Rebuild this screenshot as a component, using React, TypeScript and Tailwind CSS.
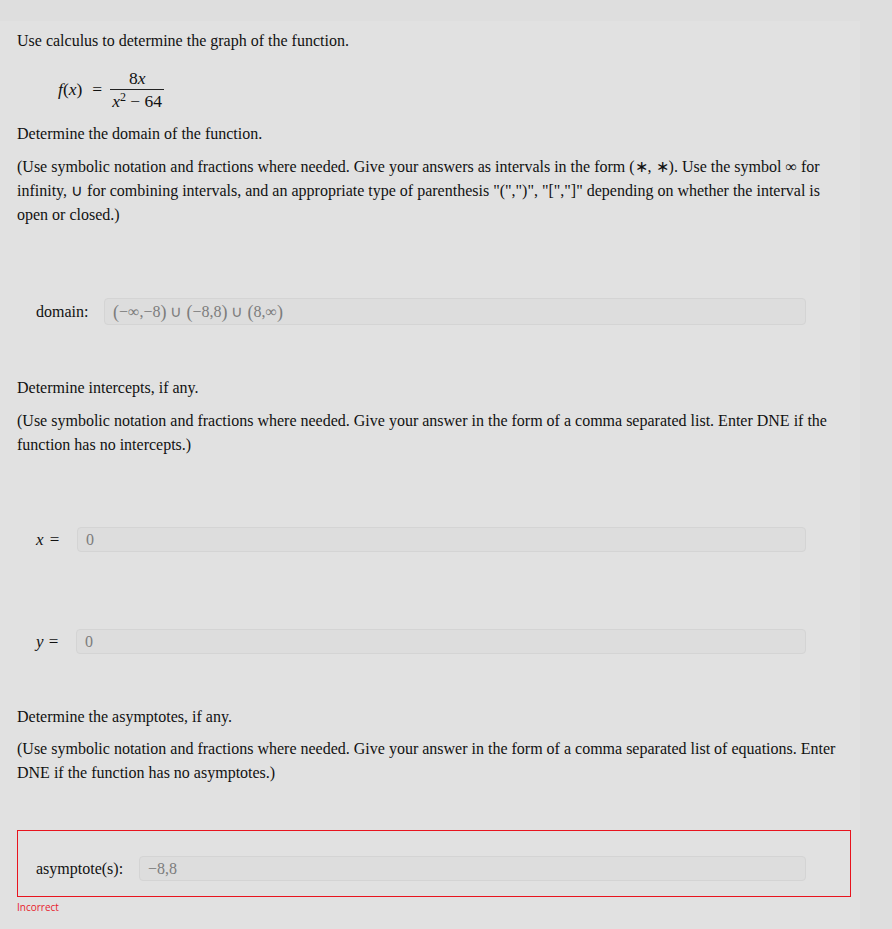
const serif = { fontFamily: '"Liberation Serif", "Times New Roman", serif' }

function Input({ children, h = 'h-[25px]' }: { children: React.ReactNode; h?: string }) {
  return (
    <div
      className={`flex-1 ${h} flex items-center rounded-[4px] border border-[#d4d4d4] bg-[#dddddd] px-[8px] text-[#7c7c7c]`}
    >
      {children}
    </div>
  )
}

function Paren({ children }: { children: React.ReactNode }) {
  return <span className="text-[18px] leading-none">{children}</span>
}

export default function App() {
  return (
    <div className="min-h-screen bg-[#dedede] pt-[21px] text-[16px] leading-[24px] text-[#111]" style={serif}>
      <div className="w-[860px] min-h-[908px] bg-[#e1e1e1] pl-[17px] pr-[9px] pt-[8px] pb-[20px]">
        <p>Use calculus to determine the graph of the function.</p>

        {/* f(x) = 8x / (x^2 - 64) */}
        <div className="mt-[12px] ml-[41px] flex items-center h-[48px] text-[17.5px]">
          <span>
            <i>f</i>(<i>x</i>)
          </span>
          <span className="ml-[10px] mr-[8px]">=</span>
          <span className="inline-flex flex-col items-center leading-[22px]">
            <span className="px-[2px]">
              8<i>x</i>
            </span>
            <span className="border-t border-[#222] px-[2px]">
              <i>x</i>
              <sup className="text-[12px]">2</sup> − 64
            </span>
          </span>
        </div>

        <p className="mt-[9px]">Determine the domain of the function.</p>
        <p className="mt-[9px] pr-[8px]">
          (Use symbolic notation and fractions where needed. Give your answers as intervals in the form (∗, ∗). Use the
          symbol ∞ for infinity, ∪ for combining intervals, and an appropriate type of parenthesis "(",")", "[","]"
          depending on whether the interval is open or closed.)
        </p>

        <div className="mt-[71px] flex items-center pl-[19px] pr-[45px]">
          <span className="w-[68px]">domain:</span>
          <Input h="h-[27px]">
            <Paren>(</Paren>−∞,−8<Paren>)</Paren>
            <span className="mx-[4px]">∪</span>
            <Paren>(</Paren>−8,8<Paren>)</Paren>
            <span className="mx-[4px]">∪</span>
            <Paren>(</Paren>8,∞<Paren>)</Paren>
          </Input>
        </div>

        <p className="mt-[51px]">Determine intercepts, if any.</p>
        <p className="mt-[9px] pr-[8px]">
          (Use symbolic notation and fractions where needed. Give your answer in the form of a comma separated list.
          Enter DNE if the function has no intercepts.)
        </p>

        <div className="mt-[70px] flex items-center pl-[19px] pr-[45px]">
          <span className="w-[41px] text-[17px]">
            <i>x</i> <span className="ml-[2px]">=</span>
          </span>
          <Input>0</Input>
        </div>

        <div className="mt-[77px] flex items-center pl-[19px] pr-[45px]">
          <span className="w-[40px] text-[17px]">
            <i>y</i> <span className="ml-[1px]">=</span>
          </span>
          <Input>0</Input>
        </div>

        <p className="mt-[51px]">Determine the asymptotes, if any.</p>
        <p className="mt-[8px] pr-[8px]">
          (Use symbolic notation and fractions where needed. Give your answer in the form of a comma separated list of
          equations. Enter DNE if the function has no asymptotes.)
        </p>

        <div className="mt-[45px] border border-[#e8141e] pt-[25px] pb-[15px] pl-[18px] pr-[44px]">
          <div className="flex items-center">
            <span className="w-[103px]">asymptote(s):</span>
            <Input>−8,8</Input>
          </div>
        </div>
        <p
          className="mt-[3px] text-[10px] leading-[14px] text-[#e8202c]"
          style={{ fontFamily: '"Open Sans", "Noto Sans", sans-serif' }}
        >
          Incorrect
        </p>
      </div>
    </div>
  )
}
